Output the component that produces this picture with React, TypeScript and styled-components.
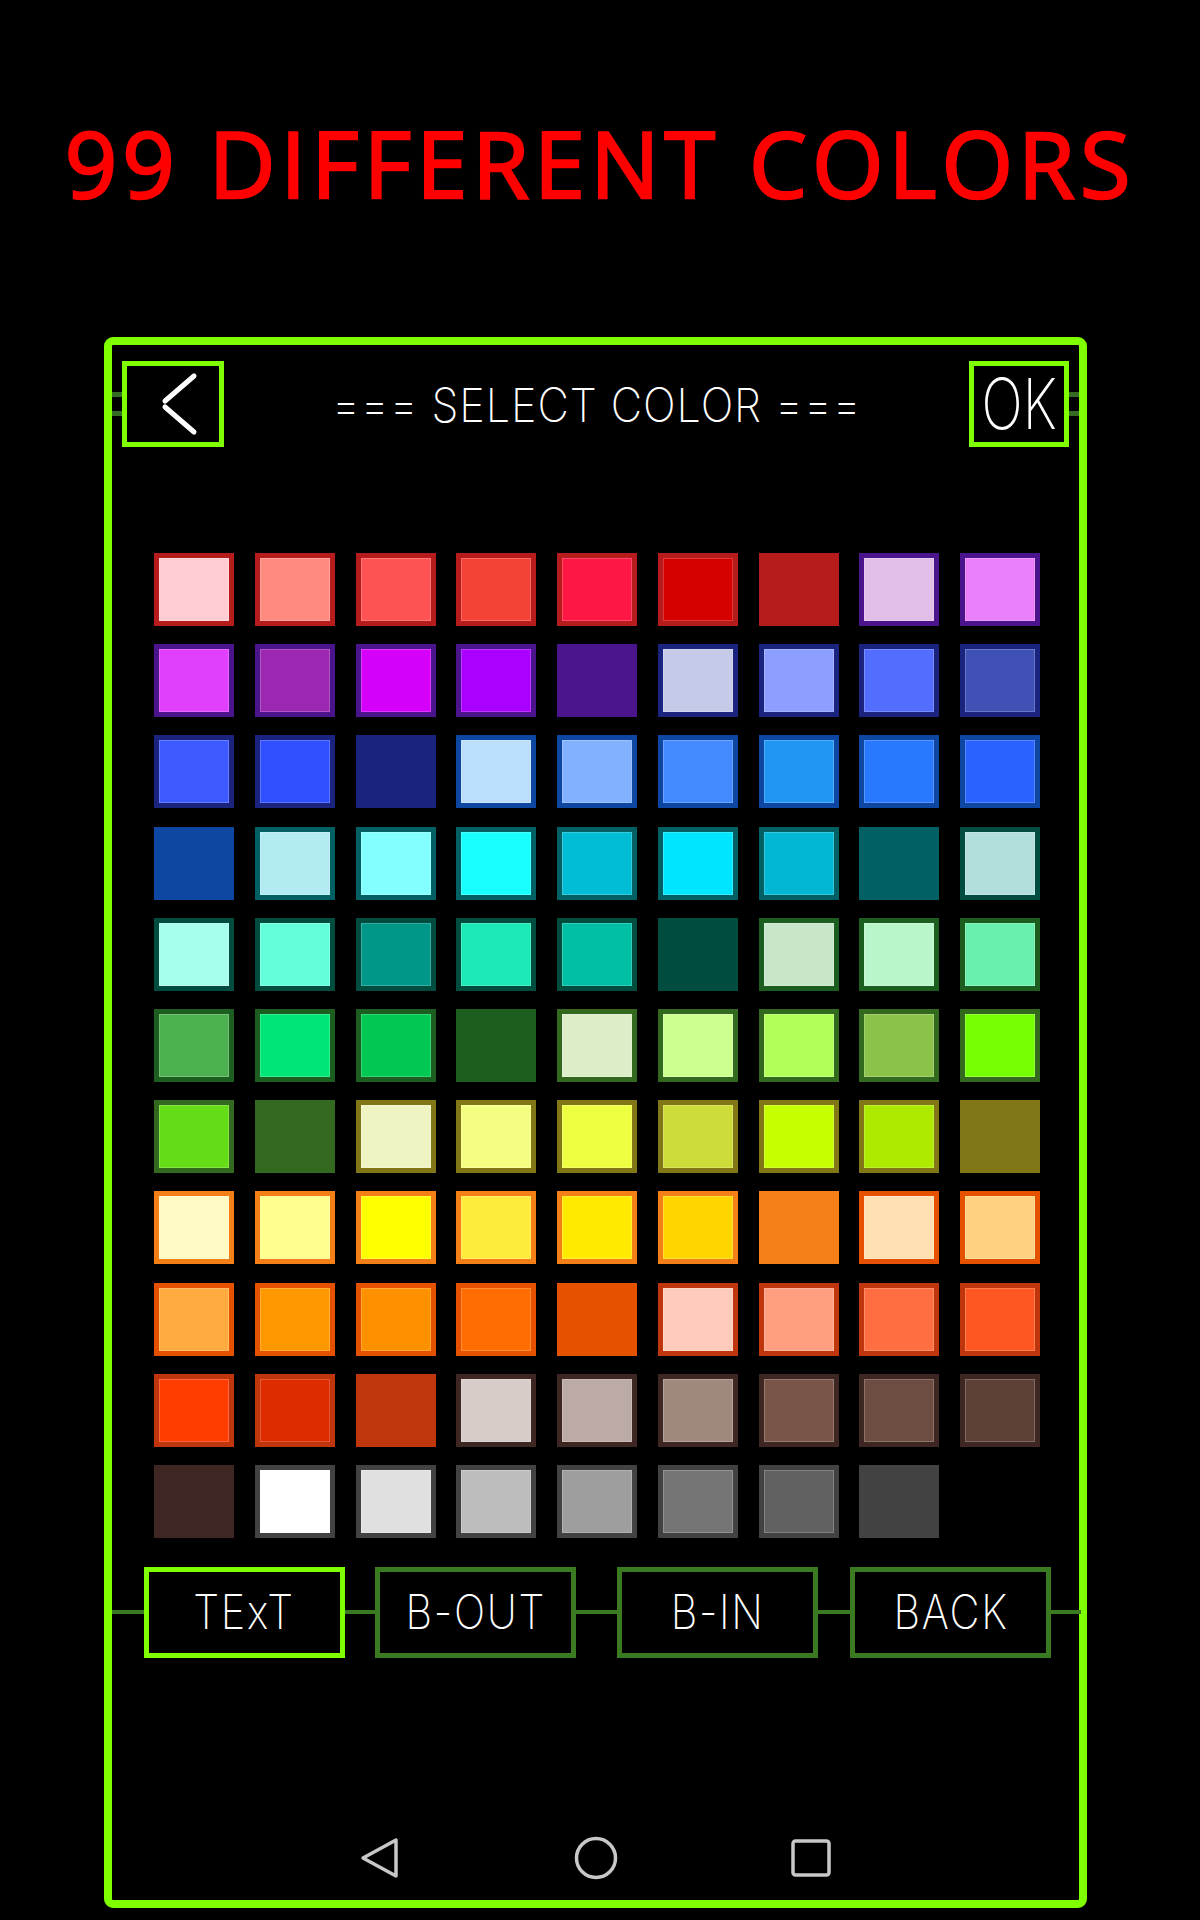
import React from 'react';
import styled, { createGlobalStyle } from 'styled-components';

const GlobalStyle = createGlobalStyle`
  html, body {
    margin: 0;
    padding: 0;
    background: #000;
  }
  #root {
    width: 1200px;
    height: 1920px;
  }
`;

const LIME = '#80ff00';
const DARK = '#3a7a20';

const Page = styled.div`
  width: 1200px;
  height: 1920px;
  background: #000;
  display: flex;
  flex-direction: column;
  align-items: flex-start;
  overflow: hidden;
`;

const Heading = styled.h1`
  margin: 0;
  width: 1200px;
  height: 337px;
  display: flex;
  align-items: center;
  justify-content: center;
  padding-bottom: 12px;
  box-sizing: border-box;
  font-family: 'Open Sans', 'Noto Sans', sans-serif;
  font-weight: 400;
  font-size: 92px;
  letter-spacing: 5px;
  color: #ff0000;
  -webkit-text-stroke: 2.5px #ff0000;
`;

const Frame = styled.div`
  margin-left: 104px;
  width: 983px;
  height: 1571px;
  box-sizing: border-box;
  border: 8px solid ${LIME};
  border-radius: 9px;
  display: flex;
  flex-direction: column;
`;

const Header = styled.div`
  display: flex;
  align-items: center;
  padding-top: 16px;
  height: 86px;
`;

const Stub = styled.div`
  width: 10px;
  height: 24px;
  display: flex;
  flex-direction: column;
  justify-content: space-between;
  &::before,
  &::after {
    content: '';
    display: block;
    height: 5px;
    background: #356b22;
  }
`;

const Box = styled.div<{ $w: number; $h: number; $active?: boolean }>`
  width: ${p => p.$w}px;
  height: ${p => p.$h}px;
  box-sizing: border-box;
  border: 5px solid ${p => (p.$active ? LIME : DARK)};
  display: flex;
  align-items: center;
  justify-content: center;
  flex-shrink: 0;
`;

const Seg = styled.span<{ $size: number; $sx?: number; $ls?: number }>`
  display: inline-block;
  font-family: Inter, 'DejaVu Sans', sans-serif;
  font-weight: 200;
  font-size: ${p => p.$size}px;
  line-height: 1;
  letter-spacing: ${p => p.$ls ?? 0}px;
  color: #fff;
  white-space: pre;
  transform: scaleX(${p => p.$sx ?? 1});
`;

const TitleSlot = styled.div`
  flex: 1;
  display: flex;
  justify-content: center;
  align-items: center;
`;

const Grid = styled.div`
  margin-top: 106px;
  margin-left: 42px;
  display: grid;
  grid-template-columns: repeat(9, 80px);
  grid-auto-rows: 73px;
  column-gap: 20.75px;
  row-gap: 18.2px;
`;

const Swatch = styled.div<{ $fill: string; $edge: string }>`
  box-sizing: border-box;
  background: ${p => p.$fill};
  border: 5px solid ${p => p.$edge};
  box-shadow: ${p => (p.$fill === p.$edge ? 'none' : 'inset 0 0 0 1px rgba(255,255,255,0.22)')};
`;

const Actions = styled.div`
  margin-top: 29px;
  display: flex;
  align-items: center;
  height: 91px;
`;

const Wire = styled.div<{ $w: number }>`
  width: ${p => p.$w}px;
  height: 4px;
  background: ${DARK};
  flex-shrink: 0;
`;

const Nav = styled.div`
  margin-top: 180px;
  display: flex;
  align-items: center;
  justify-content: center;
  gap: 173px;
  padding-right: 2px;
  height: 40px;
`;

type Row = [string, string][];

const R = '#b71c1c';
const P = '#4a148c';
const I = '#1a237e';
const B = '#0d47a1';
const C = '#006064';
const T = '#004d40';
const G = '#1b5e20';
const LG = '#33691e';
const LM = '#827717';
const Y = '#f57f17';
const O = '#e65100';
const DO = '#bf360c';
const BR = '#3e2723';
const GR = '#424242';

const swatches: Row = [
  ['#ffcdd2', R], ['#ff8a80', R], ['#ff5252', R], ['#f44336', R], ['#ff1744', R], ['#d50000', R], [R, R], ['#e1bee7', P], ['#ea80fc', P],
  ['#e040fb', P], ['#9c27b0', P], ['#d500f9', P], ['#aa00ff', P], [P, P], ['#c5cae9', I], ['#8c9eff', I], ['#536dfe', I], ['#3f51b5', I],
  ['#3d5afe', I], ['#304ffe', I], [I, I], ['#bbdefb', B], ['#82b1ff', B], ['#448aff', B], ['#2196f3', B], ['#2979ff', B], ['#2962ff', B],
  [B, B], ['#b2ebf2', C], ['#84ffff', C], ['#18ffff', C], ['#00bcd4', C], ['#00e5ff', C], ['#00b8d4', C], [C, C], ['#b2dfdb', T],
  ['#a7ffeb', T], ['#64ffda', T], ['#009688', T], ['#1de9b6', T], ['#00bfa5', T], [T, T], ['#c8e6c9', G], ['#b9f6ca', G], ['#69f0ae', G],
  ['#4caf50', G], ['#00e676', G], ['#00c853', G], [G, G], ['#dcedc8', LG], ['#ccff90', LG], ['#b2ff59', LG], ['#8bc34a', LG], ['#76ff03', LG],
  ['#64dd17', LG], [LG, LG], ['#f0f4c3', LM], ['#f4ff81', LM], ['#eeff41', LM], ['#cddc39', LM], ['#c6ff00', LM], ['#aeea00', LM], [LM, LM],
  ['#fff9c4', Y], ['#ffff8d', Y], ['#ffff00', Y], ['#ffeb3b', Y], ['#ffea00', Y], ['#ffd600', Y], [Y, Y], ['#ffe0b2', O], ['#ffd180', O],
  ['#ffab40', O], ['#ff9800', O], ['#ff9100', O], ['#ff6d00', O], [O, O], ['#ffccbc', DO], ['#ff9e80', DO], ['#ff6e40', DO], ['#ff5722', DO],
  ['#ff3d00', DO], ['#dd2c00', DO], [DO, DO], ['#d7ccc8', BR], ['#bcaaa4', BR], ['#a1887f', BR], ['#795548', BR], ['#6d4c41', BR], ['#5d4037', BR],
  [BR, BR], ['#ffffff', GR], ['#e0e0e0', GR], ['#bdbdbd', GR], ['#9e9e9e', GR], ['#757575', GR], ['#616161', GR], [GR, GR], ['#000000', '#000000'],
];

const actions = [
  { label: 'TExT', active: true },
  { label: 'B-OUT' },
  { label: 'B-IN' },
  { label: 'BACK' },
];
const wires = [32, 30, 41, 32, 30];

export default function App() {
  return (
    <Page>
      <GlobalStyle />
      <Heading>99 DIFFERENT COLORS</Heading>
      <Frame>
        <Header>
          <Stub />
          <Box $w={102} $h={86} $active>
            <svg width="40" height="64" viewBox="0 0 40 64" style={{ marginLeft: 12 }}>
              <g stroke="#fff" strokeWidth="5" strokeLinecap="round" fill="none">
                <line x1="35" y1="4" x2="6" y2="29" />
                <line x1="6" y1="35" x2="35" y2="60" />
              </g>
            </svg>
          </Box>
          <TitleSlot>
            <Seg $size={47} $sx={0.92} $ls={1}>=== SELECT COLOR ===</Seg>
          </TitleSlot>
          <Box $w={100} $h={86} $active>
            <Seg $size={70} $sx={0.78}>OK</Seg>
          </Box>
          <Stub />
        </Header>

        <Grid>
          {swatches.map(([fill, edge], i) => (
            <Swatch key={i} $fill={fill} $edge={edge} />
          ))}
        </Grid>

        <Actions>
          {actions.map((a, i) => (
            <React.Fragment key={a.label}>
              <Wire $w={wires[i]} />
              <Box $w={201} $h={91} $active={a.active}>
                <Seg $size={48} $sx={0.86} $ls={2}>{a.label}</Seg>
              </Box>
            </React.Fragment>
          ))}
          <Wire $w={wires[4]} />
        </Actions>

        <Nav>
          <svg width="42" height="42" viewBox="0 0 42 42">
            <path d="M37 3 L37 39 L4 21 Z" fill="none" stroke="#c8c8c8" strokeWidth="3.5" strokeLinejoin="round" />
          </svg>
          <svg width="44" height="44" viewBox="0 0 44 44">
            <circle cx="22" cy="22" r="19.5" fill="none" stroke="#c8c8c8" strokeWidth="3.5" />
          </svg>
          <svg width="40" height="40" viewBox="0 0 40 40">
            <rect x="2" y="3" width="36" height="34" rx="2.5" fill="none" stroke="#c8c8c8" strokeWidth="3.5" />
          </svg>
        </Nav>
      </Frame>
    </Page>
  );
}
